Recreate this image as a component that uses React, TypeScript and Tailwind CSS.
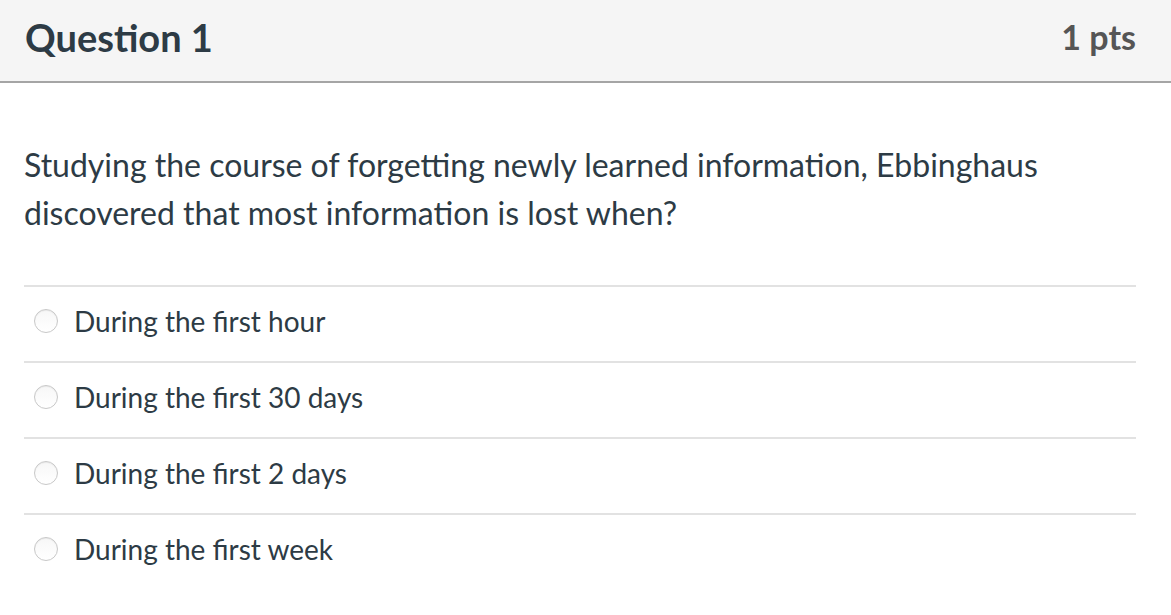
const options = [
  'During the first hour',
  'During the first 30 days',
  'During the first 2 days',
  'During the first week',
];

export default function App() {
  return (
    <div className="w-[1171px] h-[615px] bg-white font-['Lato','Liberation_Sans',sans-serif] text-[#2d3b45] overflow-hidden">
      <div className="h-[83px] bg-[#f5f5f5] border-b-2 border-[#a5a5a5] flex items-center justify-between pl-[25px] pr-[35px] pb-[7px]">
        <h2 className="text-[38px] font-bold leading-none">Question 1</h2>
        <div className="text-[34px] font-bold text-[#555555] leading-none">1 pts</div>
      </div>

      <div className="pl-[24px] pr-[35px]">
        <p className="text-[32px] leading-[48px] pt-[58px] pb-[48px]">
          Studying the course of forgetting newly learned information, Ebbinghaus discovered that most information is lost when?
        </p>

        <div>
          {options.map((opt, i) => (
            <label key={i} className="flex items-center h-[76px] border-t-2 border-[#e2e2e2] pb-[6px]">
              <span className="ml-[10px] w-[24px] h-[24px] rounded-full border border-[#c8c8c8] bg-gradient-to-b from-[#f7f7f7] to-white shadow-[inset_0_1px_1px_rgba(0,0,0,0.06)] shrink-0" />
              <span className="ml-[16px] text-[28px] leading-none">{opt}</span>
            </label>
          ))}
        </div>
      </div>
    </div>
  );
}
